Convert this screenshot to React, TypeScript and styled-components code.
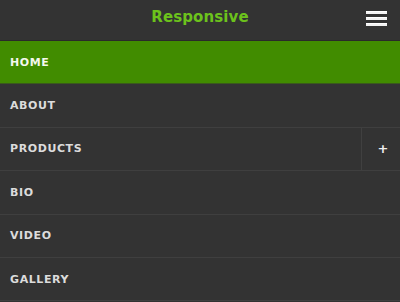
import styled, { createGlobalStyle } from 'styled-components'

const GlobalStyle = createGlobalStyle`
  html, body {
    margin: 0;
    padding: 0;
    background: #333333;
  }
  * { box-sizing: border-box; }
`

const Page = styled.div`
  width: 400px;
  height: 302px;
  background: #333333;
  font-family: 'DejaVu Sans', Verdana, sans-serif;
  overflow: hidden;
`

const Header = styled.header`
  position: relative;
  height: 41px;
  display: flex;
  align-items: center;
  justify-content: center;
  border-bottom: 1px solid #2a2a2a;
`

const Title = styled.div`
  color: #6cc21c;
  font-size: 15px;
  font-weight: bold;
  letter-spacing: 0.1px;
  margin-top: -6px;
`

const Burger = styled.button`
  position: absolute;
  right: 13px;
  top: 11px;
  width: 21px;
  height: 15px;
  padding: 0;
  border: 0;
  background: none;
  display: flex;
  flex-direction: column;
  justify-content: space-between;
  cursor: pointer;

  span {
    display: block;
    height: 3px;
    background: #f2f2f2;
    border-top: 1px solid #ffffff;
  }
`

const Menu = styled.ul`
  list-style: none;
  margin: 0;
  padding: 0;
`

const Item = styled.li<{ $active?: boolean }>`
  height: 43.4px;
  display: flex;
  align-items: stretch;
  background: ${(p) => (p.$active ? '#418c00' : '#333333')};
  border-bottom: 1px solid ${(p) => (p.$active ? '#3a5a1c' : '#3f3f3f')};
`

const Link = styled.a<{ $active?: boolean }>`
  flex: 1;
  display: flex;
  align-items: center;
  padding-left: 10px;
  color: ${(p) => (p.$active ? '#f4f8ee' : '#dcdcdc')};
  font-size: 11px;
  font-weight: bold;
  letter-spacing: 0.6px;
  text-decoration: none;
`

const Toggle = styled.span`
  width: 39px;
  display: flex;
  align-items: center;
  justify-content: center;
  padding-left: 4px;
  border-left: 1px solid #404040;
  color: #eeeeee;
  font-size: 13px;
  font-weight: bold;
`

const items = ['HOME', 'ABOUT', 'PRODUCTS', 'BIO', 'VIDEO', 'GALLERY']

export default function App() {
  return (
    <Page>
      <GlobalStyle />
      <Header>
        <Title>Responsive</Title>
        <Burger aria-label="menu">
          <span />
          <span />
          <span />
        </Burger>
      </Header>
      <Menu>
        {items.map((label, i) => (
          <Item key={label} $active={i === 0}>
            <Link href="#" $active={i === 0}>
              {label}
            </Link>
            {label === 'PRODUCTS' && <Toggle>+</Toggle>}
          </Item>
        ))}
      </Menu>
    </Page>
  )
}
